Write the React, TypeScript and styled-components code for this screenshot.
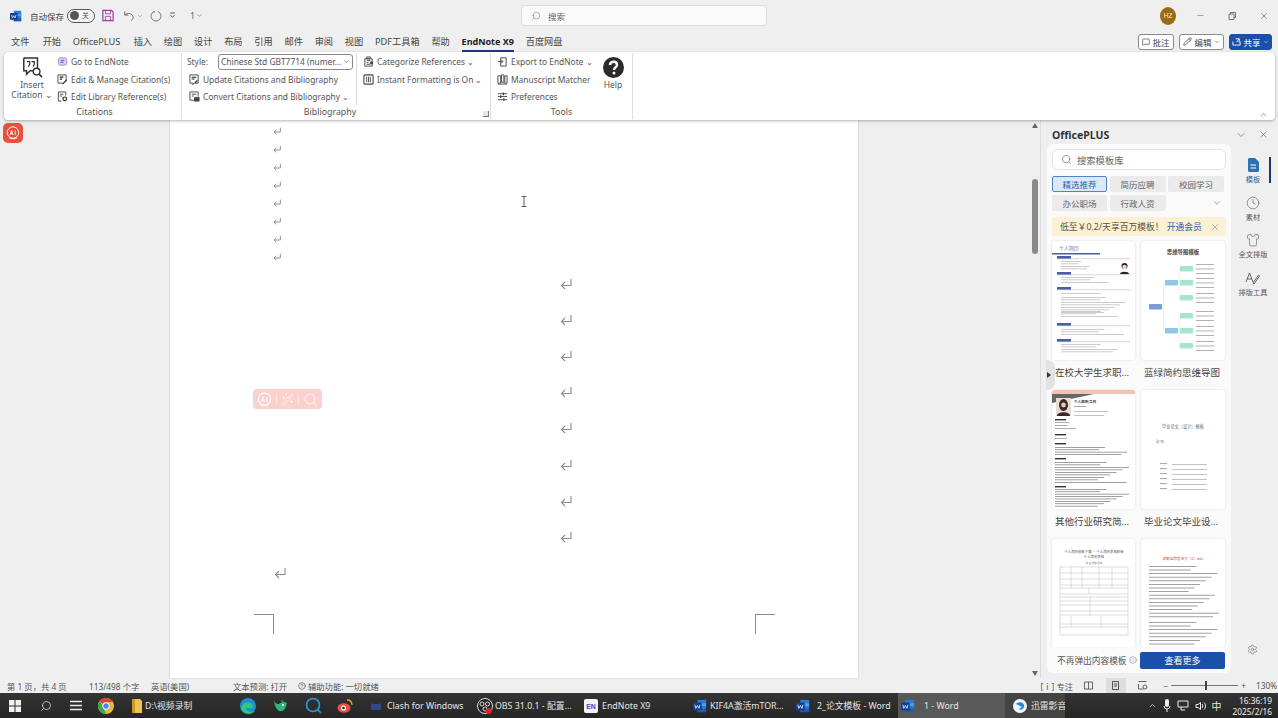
import React from "react";
import styled, { createGlobalStyle } from "styled-components";
import { Search, X, Minus, ChevronDown, ChevronUp, Settings, Pencil, MessageSquare, Clock, Shirt, CircleHelp, Wand2, Info } from "lucide-react";

const Global = createGlobalStyle`
  html, body { margin: 0; padding: 0; background: #efefef; }
  body { font-family: "Noto Sans", "Noto Sans CJK SC", sans-serif; color: #3a3a3a; }
  svg { flex: none; display: block; }
`;
const Root = styled.div`
  width: 1278px; height: 718px; overflow: hidden; position: relative;
  display: flex; flex-direction: column; background: #efefef;
`;

/* Title bar */
const TitleBar = styled.div`height: 31px; flex: none; display: flex; align-items: center; padding-left: 10px; position: relative;`;
const AutoSave = styled.span`font-size: 8.5px; margin-left: 8px; width: 37px; color: #444;`;
const Toggle = styled.div`
  width: 28px; height: 14px; border: 1px solid #555; border-radius: 8px; box-sizing: border-box;
  display: flex; align-items: center; padding-left: 2px; gap: 3px; background: #f6f6f6;
`;
const ToggleDot = styled.div`width: 9px; height: 9px; border-radius: 50%; background: #555;`;
const ToggleX = styled.span`font-size: 7px; color: #555; line-height: 1;`;
const QuickTools = styled.div`display: flex; align-items: center; margin-left: 7px; color: #666;`;
const Quick = styled.span<{ $ml: number }>`display: inline-flex; margin-left: ${p => p.$ml}px;`;
const TinyNum = styled.span`font-size: 9px; margin-left: 14px; display: flex; align-items: center; gap: 1px;`;
const SearchBar = styled.div`
  position: absolute; left: 521px; top: 5px; width: 246px; height: 21px; box-sizing: border-box;
  background: #fafafa; border: 1px solid #dcdcdc; border-radius: 4px; display: flex; align-items: center;
  padding-left: 9px; gap: 7px; font-size: 8.5px; color: #666;
`;
const Flip = styled.span`display: inline-flex; transform: scaleX(-1);`;
const WinControls = styled.div`margin-left: auto; display: flex; align-items: center; color: #444;`;
const Avatar = styled.div`
  width: 16px; height: 18px; border-radius: 50%; background: #9a6a14; color: #f6e9c8; font-size: 7px;
  display: flex; align-items: center; justify-content: center; margin-right: 12px;
`;
const WinBtn = styled.div<{ $w: number }>`width: ${p => p.$w}px; display: flex; justify-content: center;`;

/* Tabs */
const TabRow = styled.div`height: 21px; flex: none; display: flex; align-items: center; padding-left: 11px; gap: 11.8px; font-size: 9.2px; color: #444;`;
const Tab = styled.span<{ $active?: boolean; $ml?: number }>`
  position: relative; white-space: nowrap; line-height: 21px; margin-left: ${p => p.$ml ?? 0}px;
  font-weight: ${p => (p.$active ? 700 : 400)}; color: ${p => (p.$active ? "#222" : "#444")};
  ${p => p.$active && `font-size: 9px; &::after{content:"";position:absolute;left:0;right:0;bottom:0;height:2px;background:#1c3a7a;}`}
`;
const TabActions = styled.div`margin-left: auto; margin-right: 6px; display: flex; gap: 5px; align-items: center;`;
const ActionBtn = styled.div<{ $w: number; $blue?: boolean }>`
  width: ${p => p.$w}px; height: 16px; box-sizing: border-box; border-radius: 3px; display: flex; align-items: center; justify-content: center; gap: 2px;
  font-size: 8.5px; border: 1px solid ${p => (p.$blue ? "#1a50a8" : "#8a8a8a")};
  background: ${p => (p.$blue ? "#1a50a8" : "#fff")}; color: ${p => (p.$blue ? "#fff" : "#444")};
`;

/* Ribbon */
const Ribbon = styled.div`
  height: 68px; flex: none; margin: 0 3px 0 4px; background: #fff; border-radius: 5px 5px 4px 4px;
  box-shadow: 0 1px 3px rgba(0,0,0,.3); display: flex; position: relative; z-index: 3; padding-left: 6px; box-sizing: border-box;
`;
const Group = styled.div<{ $w: number }>`
  width: ${p => p.$w}px; flex: none; display: flex; flex-direction: column; border-right: 1px solid #dedede; box-sizing: border-box; position: relative; margin: 1px 0;
`;
const GroupBody = styled.div`height: 52px; flex: none; display: flex;`;
const GroupLabel = styled.div<{ $pr?: number }>`height: 14px; text-align: center; font-size: 8.8px; color: #555; line-height: 14px; padding-right: ${p => p.$pr ?? 0}px;`;
const BigBtn = styled.div<{ $w: number }>`
  width: ${p => p.$w}px; flex: none; display: flex; flex-direction: column; align-items: center; font-size: 8.5px; line-height: 10px; color: #555; padding-top: 4px; text-align: center;
`;
const BigIcon = styled.div`height: 21px; margin-bottom: 2px;`;
const SmallCol = styled.div<{ $pl?: number; $w?: number; $line?: boolean }>`
  display: flex; flex-direction: column; padding-left: ${p => p.$pl ?? 0}px; ${p => p.$w && `width:${p.$w}px;box-sizing:border-box;`}
  ${p => p.$line && "border-right:1px solid #dedede;"}
`;
const SmallBtn = styled.div<{ $indent?: number; $gap?: number }>`
  height: 17.5px; flex: none; display: flex; align-items: center; gap: ${p => p.$gap ?? 3}px; font-size: 8.4px; color: #555; white-space: nowrap; padding-left: ${p => p.$indent ?? 0}px;
`;
const StyleRow = styled.div`height: 17.5px; flex: none; display: flex; align-items: center; font-size: 8.4px; color: #555;`;
const StyleLabel = styled.span`width: 31px;`;
const StyleSelect = styled.div`
  width: 135px; height: 16px; border: 1px solid #8a8a8a; border-radius: 3px; box-sizing: border-box; display: flex; align-items: center;
  justify-content: space-between; padding: 0 2px 0 2px; font-size: 8.4px; white-space: nowrap; color: #555;
`;
const DialogMark = styled.div`position: absolute; right: 1px; bottom: 2px; width: 5px; height: 5px; border-right: 1px solid #777; border-bottom: 1px solid #777; background: #e4e4e4;`;
const Collapse = styled.div`position: absolute; right: 7px; bottom: 1px; color: #777;`;

/* Main */
const Main = styled.div`flex: 1; display: flex; min-height: 0; position: relative;`;
const LeftGutter = styled.div`width: 170px; flex: none; position: relative;`;
const RedBtn = styled.div`
  position: absolute; left: 3px; top: 3px; width: 20px; height: 20px; border-radius: 5px; background: #e8503f;
  display: flex; align-items: center; justify-content: center;
`;
const Page = styled.div`
  width: 688px; flex: none; background: #fff; box-shadow: 0 0 2px rgba(0,0,0,.2); box-sizing: border-box; padding: 2px 83px 0 84px; color: #8b8b8b;
`;
const Para = styled.div<{ $h: number; $ml: number }>`height: ${p => p.$h}px; display: flex; align-items: center; padding-left: ${p => p.$ml}px;`;
const CropRow = styled.div`display: flex; justify-content: space-between; margin-top: 23px;`;
const Crop = styled.div<{ $right?: boolean }>`
  width: 20px; height: 20px; border-top: 1px solid #888; box-sizing: border-box;
  ${p => (p.$right ? "border-left:1px solid #888;" : "border-right:1px solid #888;")}
`;
const RightGutter = styled.div`width: 172px; flex: none;`;
const IBeam = styled.div`position: absolute; left: 521px; top: 76px; width: 6px; height: 11px; color: #333;`;
const FloatBar = styled.div`
  position: absolute; left: 253px; top: 269px; width: 69px; height: 20px; border-radius: 4px; background: #fbd0ce;
  display: flex; align-items: center; justify-content: space-around; padding: 0 2px; box-sizing: border-box;
`;
const FloatSep = styled.div`width: 1px; height: 10px; background: #fde4e3;`;

/* Scrollbar */
const Scrollbar = styled.div`width: 11px; flex: none; position: relative; display: flex; flex-direction: column; align-items: center; justify-content: space-between; padding: 3px 0 2px; box-sizing: border-box; border-right: 1px solid #dcdcdc;`;
const Arrow = styled.div<{ $down?: boolean }>`
  width: 0; height: 0; border-left: 3.5px solid transparent; border-right: 3.5px solid transparent;
  ${p => (p.$down ? "border-top: 5px solid #666;" : "border-bottom: 5px solid #666;")}
`;
const Thumb = styled.div`position: absolute; left: 2px; top: 59px; width: 6px; height: 75px; border-radius: 3px; background: #8a8a8a;`;

/* Panel */
const Panel = styled.div`flex: 1; display: flex; flex-direction: column; position: relative; min-width: 0;`;
const PanelHead = styled.div`height: 24px; flex: none; box-sizing: border-box; padding: 6px 9px 0 11px; display: flex; align-items: center; font-size: 10.5px; font-weight: 700; color: #333;`;
const PanelHeadIcons = styled.div`margin-left: auto; display: flex; gap: 11px; color: #555;`;
const PanelRow = styled.div`flex: 1; display: flex; min-height: 0;`;
const PanelMain = styled.div`width: 190px; flex: none; display: flex; flex-direction: column; position: relative;`;
const PanelBody = styled.div`
  margin-left: 6px; width: 184px; height: 529px; background: #fafafa; border-radius: 6px; box-sizing: border-box; padding: 5px 5px 0 5px; display: flex; flex-direction: column; overflow: hidden;
`;
const PanelSearch = styled.div`
  height: 21px; flex: none; border: 1px solid #e4e4e4; border-radius: 6px; background: #fff; box-sizing: border-box; display: flex; align-items: center; padding-left: 8px; gap: 5px; font-size: 9.3px; color: #666;
`;
const Chips = styled.div`display: grid; grid-template-columns: 55px 56px 56px; gap: 3px 2.5px; margin-top: 6px; position: relative; flex: none;`;
const Chip = styled.div<{ $on?: boolean }>`
  height: 16px; border-radius: 2px; font-size: 8.5px; display: flex; align-items: center; justify-content: center; box-sizing: border-box;
  background: ${p => (p.$on ? "#dbe8f7" : "#ebebeb")}; color: ${p => (p.$on ? "#2b5ea8" : "#666")}; ${p => p.$on && "border:1px solid #4d85c5;"}
`;
const ChipMore = styled.div`display: flex; align-items: center; justify-content: flex-end; padding-right: 2px; color: #555;`;
const Banner = styled.div`
  height: 19px; flex: none; margin-top: 6px; background: #fdf1d3; border-radius: 2px; display: flex; align-items: center; padding: 0 6px 0 8px; font-size: 8.8px; color: #5a5040; gap: 3px;
`;
const BannerLink = styled.span`color: #2b5ea8;`;
const BannerClose = styled.div`margin-left: auto; display: flex; color: #777;`;
const Cards = styled.div`display: grid; grid-template-columns: 83px 84px; column-gap: 6px; margin-top: 5px; flex: none;`;
const CardWrap = styled.div`display: flex; flex-direction: column;`;
const Card = styled.div<{ $h?: number }>`
  height: ${p => p.$h ?? 119}px; background: #fff; border-radius: 3px; box-shadow: 0 0 2px rgba(0,0,0,.15); overflow: hidden;
`;
const CardTitle = styled.div`height: 30px; padding: 5.5px 0 0 3px; box-sizing: border-box; font-size: 9.5px; color: #444; white-space: nowrap; line-height: 13px;`;
const PanelFoot = styled.div`
  position: absolute; left: 6px; top: 503px; width: 184px; height: 26px; background: #fafafa; border-radius: 0 0 6px 6px; display: flex; align-items: center; box-sizing: border-box; padding: 0 6px 0 10px; font-size: 8.7px; color: #555; gap: 2px;
`;
const MoreBtn = styled.div`margin-left: auto; width: 85px; height: 17px; border-radius: 2px; background: #1a50a8; color: #fff; font-size: 9px; display: flex; align-items: center; justify-content: center;`;
const Rail = styled.div`flex: 1; display: flex; flex-direction: column; align-items: center; position: relative; padding: 13px 3px 0 0; box-sizing: border-box;`;
const RailItem = styled.div<{ $on?: boolean }>`height: 37.5px; flex: none; display: flex; flex-direction: column; align-items: center; font-size: 7.2px; line-height: 10px; color: ${p => (p.$on ? "#2e5f9e" : "#555")}; white-space: nowrap; gap: 1px;`;
const RailItemIcon = styled.div`height: 16px; display: flex; align-items: center;`;
const RailMark = styled.div`position: absolute; right: 7px; top: 13px; width: 2px; height: 26px; background: #1c3a6e;`;
const RailGear = styled.div`position: absolute; right: 20px; top: 500px; color: #555; display: flex;`;
const Handle = styled.div`
  position: absolute; left: 5px; top: 240px; width: 9px; height: 30px; background: #e2e2e2; border-radius: 0 8px 8px 0; display: flex; align-items: center; padding-left: 1px; box-sizing: border-box;
`;
const HandleArrow = styled.div`width: 0; height: 0; border-top: 3.5px solid transparent; border-bottom: 3.5px solid transparent; border-left: 4px solid #333;`;

/* Status */
const StatusBar = styled.div`height: 15px; flex: none; display: flex; align-items: center; font-size: 8.3px; color: #555; position: relative;`;
const StatusText = styled.span<{ $w: number; $pl?: number }>`width: ${p => p.$w}px; flex: none; white-space: nowrap; display: flex; align-items: center; gap: 2px; box-sizing: border-box; padding-left: ${p => p.$pl ?? 0}px;`;
const StatusRight = styled.div`margin-left: auto; display: flex; align-items: center; height: 15px;`;
const ViewBtn = styled.div<{ $on?: boolean; $mr?: number }>`width: 20px; height: 15px; margin-right: ${p => p.$mr ?? 7}px; display: flex; align-items: center; justify-content: center; background: ${p => (p.$on ? "#dddddd" : "transparent")};`;
const Slider = styled.div`width: 67px; height: 1px; background: #777; position: relative; margin: 0 3px;`;
const SliderKnob = styled.div`position: absolute; left: 34px; top: -4px; width: 2px; height: 9px; background: #444;`;

/* Taskbar */
const Taskbar = styled.div`height: 25px; flex: none; background: linear-gradient(#343434, #262626); display: flex; align-items: stretch; color: #e6e6e6; font-size: 8.8px; position: relative;`;
const TaskSlot = styled.div<{ $w: number; $active?: boolean; $soft?: boolean; $pl?: number; $gap?: number; $left?: boolean }>`
  width: ${p => p.$w}px; flex: none; display: flex; align-items: center; justify-content: ${p => (p.$left ? "flex-start" : "center")};
  gap: ${p => p.$gap ?? 5}px; white-space: nowrap; overflow: hidden; box-sizing: border-box; padding-left: ${p => p.$pl ?? 0}px;
  background: ${p => (p.$active ? "#595959" : p.$soft ? "#444" : "transparent")};
`;
const Tray = styled.div`margin-left: auto; display: flex; align-items: center; gap: 6px; padding-right: 6px;`;
const Clock2 = styled.div`font-size: 8.3px; line-height: 11px; text-align: right; margin-left: 5px; color: #eee;`;
const TrayZh = styled.span`font-size: 10px;`;

/* ----- drawings ----- */
const ReturnMark = ({ big }: { big?: boolean }) => (
  <svg width={big ? 12 : 8} height={big ? 12 : 8} viewBox="0 0 12 12" fill="none" stroke="#8b8b8b" strokeWidth={big ? 1.1 : 1.4}>
    <path d="M11 1v6.5H1.5M5 4 1.5 7.5 5 11" />
  </svg>
);
const WordIcon = ({ s = 12 }: { s?: number }) => (
  <svg width={s} height={s} viewBox="0 0 16 16"><path d="M5 1h10v14H5z" fill="#2b7cd3" /><path d="M5 5h10v3H5z" fill="#41a5ee" /><path d="M5 11h10v4H5z" fill="#185abd" /><rect x="0" y="4" width="10" height="9" rx="1" fill="#103f91" /><path d="M2 6.5l1.2 4.2L5 7.5l1.8 3.2L8 6.5" fill="none" stroke="#fff" strokeWidth=".9" /></svg>
);
const AiGlyph = ({ c = "#fff", s = 14 }: { c?: string; s?: number }) => (
  <svg width={s} height={s} viewBox="0 0 16 16" fill="none" stroke={c}>
    <circle cx="8" cy="7.5" r="6.5" strokeWidth="1.1" />
    <path d="M4.6 10.3 6.3 5l1.7 5.3M5.2 8.7h2.2M10.6 5v5.3" strokeWidth="1" />
    <path d="M3.5 13.5c3 1.4 6 1.4 9 0" strokeWidth="1" />
  </svg>
);
const InsertIcon = () => (
  <svg width="24" height="21" viewBox="0 0 24 23" fill="none" stroke="#333"><path d="M3 1h15v11M3 1v14h3v4l4-4h4" strokeWidth="1.6" /><path d="M6.5 5h3v3l-1.5 2.5M11.5 5h3v3L13 10.5" strokeWidth="1.3" /><circle cx="17" cy="16" r="3.7" strokeWidth="1.5" /><path d="M19.7 18.7 23 22" strokeWidth="1.8" /></svg>
);
const NoteIcon = ({ kind }: { kind: string }) => {
  const common = { width: 11, height: 11, viewBox: "0 0 12 12", fill: "none", stroke: "#444", strokeWidth: 1 } as const;
  if (kind === "en") return <svg {...common}><rect x="1.5" y="2" width="9" height="8" rx="2" fill="#d8d0f0" stroke="#9a8fd0" /><path d="M4 5h4M4 7h3" stroke="#5f4fb0" /></svg>;
  if (kind === "edit") return <svg {...common}><path d="M1 1h9v6M1 1v9h5" /><path d="M3 3.5h4M3 5.5h2.5M6 11l4.5-4.5" stroke="#222" strokeWidth="1.3" /></svg>;
  if (kind === "lib") return <svg {...common}><path d="M1.5 1h8v4M1.5 1v10h3.5" /><path d="M3 3.5h4M3 5.5h2.5" /><circle cx="8.5" cy="8.5" r="2" stroke="#222" strokeWidth="1.2" /></svg>;
  if (kind === "update") return <svg {...common}><path d="M1 1h9v9H6l-2 1.5V10H1z" /><path d="M3 3.5h5M3 5.5h3M9 7l-2.5 3" stroke="#222" strokeWidth="1.2" /></svg>;
  if (kind === "convert") return <svg {...common}><path d="M1 1h9v5M1 1v9h5" /><path d="M3 3.5h5M3 5.5h2" /><path d="M6 7h5v4H6z" fill="#444" /></svg>;
  if (kind === "cat") return <svg {...common}><path d="M2 3h8v8H2z" /><path d="M4 1h4v2H4zM4 5h4M4 7h2M4 9h4" /><path d="M8 6.5h2.5v2H8z" fill="#444" /></svg>;
  if (kind === "fmt") return <svg {...common}><rect x="1" y="1" width="10" height="10" rx="1" strokeWidth="1.2" /><path d="M4 3v6M6 3v6M8 3v6" /></svg>;
  if (kind === "export") return <svg {...common}><path d="M4 2h6v9H4zM1 6h5M4.5 4 6.5 6 4.5 8" /></svg>;
  if (kind === "match") return <svg {...common}><path d="M1 2h3v8H1zM5 1h2.5v8H5zM8.5 2H11v8H8.5zM1 11h10" /></svg>;
  return <svg {...common}><path d="M1 3h10M1 6h10M1 9.5h10" /><path d="M7 1.5v3M4 4.5v3M7.5 8v3" strokeWidth="1.3" /></svg>;
};
const HelpIcon = () => (
  <svg width="21" height="21" viewBox="0 0 21 21"><circle cx="10.5" cy="10.5" r="10.5" fill="#2b2b2b" /><path d="M7 8c0-2 1.6-3.3 3.6-3.3S14 6 14 7.9c0 2.4-3 2.6-3 5" fill="none" stroke="#fff" strokeWidth="2.4" /><circle cx="11" cy="16" r="1.5" fill="#fff" /></svg>
);
const lines = (ys: number[], x: number, w: number, c = "#b5b5b5", h = 0.7, seedW = true) =>
  ys.map((y, i) => <rect key={`${x}-${y}`} x={x} y={y} width={seedW ? w * (0.55 + ((i * 37 + 11) % 45) / 100) : w} height={h} fill={c} />);
const range = (from: number, n: number, step: number) => Array.from({ length: n }, (_, i) => from + i * step);

const Tag = ({ y, w = 14, c = "#4a5fa0" }: { y: number; w?: number; c?: string }) => (
  <g><rect x="5" y={y} width={w} height="2.6" fill={c} /><rect x="5" y={y + 2.6} width="74" height=".5" fill={c} opacity=".5" /></g>
);
const ThumbResume = () => (
  <svg width="84" height="119" viewBox="0 0 84 119">
    <text x="7" y="9" fontSize="5" fill="#5b6fb0" fontFamily="Noto Sans CJK SC">个人简历</text>
    <rect x="0" y="12" width="48" height="1.5" fill="#4a5fa0" />
    <Tag y={15} />{lines(range(20, 4, 2.5), 9, 30)}
    <circle cx="72.5" cy="25" r="3" fill="#222" /><circle cx="72.5" cy="26" r="2.2" fill="#f3d6c4" /><path d="M68 33c0-3 9-3 9 0z" fill="#222" />
    <Tag y={31} />{lines(range(36, 3, 2.5), 9, 50)}
    <Tag y={46} />{lines([52], 9, 60)}{lines(range(56, 7, 2.5), 9, 68)}{lines(range(70, 3, 2.5), 9, 60)}
    <Tag y={82} />{lines(range(88, 3, 2.5), 9, 66)}
    <Tag y={98} />{lines(range(103, 4, 2.5), 9, 60)}
  </svg>
);
const Node = ({ x, y, w, c }: { x: number; y: number; w: number; c: string }) => <rect x={x} y={y} width={w} height="5.5" rx=".8" fill={c} />;
const ThumbMind = () => {
  const greens = [25, 39, 54, 72, 87, 102];
  return (
    <svg width="84" height="119" viewBox="0 0 84 119">
      <text x="42" y="13" fontSize="5.4" fontWeight="700" textAnchor="middle" fill="#444" fontFamily="Noto Sans CJK SC">思维导图模板</text>
      <path d="M21 66h1.5V42H24M21 66h1.5V90H24M37 42h1V28h1M37 42h2M37 42h1V57h1M37 90h1V75h1M37 90h2M37 90h1V105h1" fill="none" stroke="#cde" strokeWidth=".4" />
      <Node x={8} y={63} w={13} c="#7a9bd8" /><Node x={24} y={39} w={13} c="#90c5e8" /><Node x={24} y={87} w={13} c="#90c5e8" />
      {greens.map(y => <g key={y}><Node x={39} y={y} w={13} c="#a5e5d0" />{[-2, 2.5, 7].map(d => <rect key={d} x="55" y={y + d} width="18" height=".9" fill="#aaa" />)}</g>)}
    </svg>
  );
};
const ThumbResume2 = () => (
  <svg width="84" height="119" viewBox="0 0 84 119">
    <rect width="84" height="4" fill="#f2c3ae" /><path d="M0 4h42L0 13z" fill="#666" />
    <rect x="4" y="8" width="15" height="18" fill="#e8dcd6" /><ellipse cx="11.5" cy="15" rx="4.5" ry="6" fill="#3a2a25" /><circle cx="11.5" cy="15" r="2.4" fill="#eac6b4" /><path d="M5 26c0-5 13-5 13 0z" fill="#3a2a25" />
    <text x="22" y="13" fontSize="3.5" fontWeight="700" fill="#333" fontFamily="Noto Sans CJK SC">个人简历/工作</text>
    {lines([16], 22, 18, "#888")}{lines([21, 25], 22, 52, "#aaa")}
    {[29, 44, 53, 68, 96].map(y => <g key={y}><rect x="3" y={y} width="11" height="1.4" fill="#333" /></g>)}
    {lines(range(32, 3, 3), 3, 22, "#888")}{lines([48], 3, 18, "#888")}
    {lines(range(57, 4, 2.4), 3, 76, "#777")}{lines(range(72, 9, 2.5), 3, 78, "#777")}{lines(range(99, 8, 2.4), 3, 78, "#777")}
  </svg>
);
const ThumbThesis = () => (
  <svg width="84" height="119" viewBox="0 0 84 119">
    <text x="42" y="38" fontSize="4.2" textAnchor="middle" fill="#666" fontFamily="Noto Sans CJK SC">毕业论文（设计）模板</text>
    <text x="15" y="53" fontSize="3.4" fill="#777" fontFamily="Noto Sans CJK SC">题 目:</text>
    {range(73, 6, 5).map(y => <g key={y}><rect x="19" y={y} width="7" height="1.1" fill="#aaa" /><rect x="31" y={y + 1} width="35" height=".6" fill="#999" /></g>)}
  </svg>
);
const ThumbForm = () => (
  <svg width="84" height="108" viewBox="0 0 84 108">
    <text x="42" y="14" fontSize="3.4" textAnchor="middle" fill="#555" fontFamily="Noto Sans CJK SC">个人简历模板下载 · 个人简历表格模板</text>
    <text x="42" y="19" fontSize="3.4" textAnchor="middle" fill="#555" fontFamily="Noto Sans CJK SC">个人简历表格</text>
    <text x="42" y="25" fontSize="2.5" textAnchor="middle" fill="#777" fontFamily="Noto Sans CJK SC">姓 名 求职 意向</text>
    <g fill="none" stroke="#bbb" strokeWidth=".5">
      <rect x="8" y="28" width="68" height="68" />
      {[34, 40, 46, 49, 55, 58, 62, 66, 72, 76, 85, 88].map(y => <path key={y} d={`M8 ${y}h68`} />)}
      <path d="M19 28v21M30 28v21M47 28v21M60 28v21M37 49v6M38 58v19M19 77v11M49 77v11" />
    </g>
  </svg>
);
const ThumbEssay = () => (
  <svg width="84" height="108" viewBox="0 0 84 108">
    <text x="42" y="21" fontSize="3.6" textAnchor="middle" fill="#c04a4a" fontFamily="Noto Sans CJK SC">求职自荐信范文（2）doc</text>
    {lines(range(27, 15, 3.6), 8, 72, "#8a8a8a", .8)}{lines(range(83, 7, 3.6), 8, 72, "#8a8a8a", .8)}
  </svg>
);

export default function App() {
  return (
    <Root>
      <Global />
      <TitleBar>
        <WordIcon />
        <AutoSave>自动保存</AutoSave>
        <Toggle><ToggleDot /><ToggleX>关</ToggleX></Toggle>
        <QuickTools>
          <svg width="12" height="13" viewBox="0 0 14 14"><path d="M1 1h10l2 2v10H1z" fill="none" stroke="#a03aa0" strokeWidth="1.4" /><path d="M4 1v4h6V1M4 13V8h6v5" fill="none" stroke="#a03aa0" /></svg>
          <Quick $ml={8}><svg width="13" height="12" viewBox="0 0 14 12" fill="none" stroke="#666"><path d="M3 1v4h4M3 5c3-3 8-2 9 2 0 2-1 3-2 4" /></svg></Quick>
          <Quick $ml={2}><ChevronDown size={6} /></Quick>
          <Quick $ml={7}><svg width="12" height="12" viewBox="0 0 12 12" fill="none" stroke="#777"><path d="M4 1.5a5 5 0 1 0 4 0M4 1v2" /></svg></Quick>
          <Quick $ml={7}><svg width="7" height="7" viewBox="0 0 7 7" fill="none" stroke="#666"><path d="M1 1h5M1.5 3 3.500 5.500 5.500 3" /></svg></Quick>
          <TinyNum>1<ChevronDown size={7} /></TinyNum>
        </QuickTools>
        <SearchBar><Flip><Search size={10} strokeWidth={1.2} /></Flip>搜索</SearchBar>
        <WinControls>
          <Avatar>HZ</Avatar>
          <WinBtn $w={25}><Minus size={9} strokeWidth={1.2} /></WinBtn>
          <WinBtn $w={37}>
            <svg width="8" height="8" viewBox="0 0 8 8" fill="none" stroke="#555" strokeWidth=".8"><path d="M1 2h5v5.500H1zM2.500 2V.5H7.500V5.500H6" /></svg>
          </WinBtn>
          <WinBtn $w={28}><X size={10} strokeWidth={1.2} /></WinBtn>
        </WinControls>
      </TitleBar>

      <TabRow>
        <Tab>文件</Tab><Tab $ml={1.5}>开始</Tab><Tab>OfficePLUS</Tab><Tab $ml={1.5}>插入</Tab><Tab>绘图</Tab><Tab>设计</Tab><Tab>布局</Tab><Tab>引用</Tab><Tab>邮件</Tab><Tab>审阅</Tab><Tab>视图</Tab><Tab>PDF工具箱</Tab><Tab>帮助</Tab><Tab $active>EndNote X9</Tab><Tab>百度网盘</Tab>
        <TabActions>
          <ActionBtn $w={36}><MessageSquare size={8} />批注</ActionBtn>
          <ActionBtn $w={45}><Pencil size={9} />编辑<ChevronDown size={6} /></ActionBtn>
          <ActionBtn $w={43} $blue>
            <svg width="9" height="9" viewBox="0 0 10 10" fill="none" stroke="#fff"><path d="M1 5v4h8V5M5 6l3-4M4 2h4v4" /></svg>
            共享<ChevronDown size={6} />
          </ActionBtn>
        </TabActions>
      </TabRow>

      <Ribbon>
        <Group $w={172}>
          <GroupBody>
            <BigBtn $w={44}><BigIcon><InsertIcon /></BigIcon><span>Insert</span><span>Citation ⌄</span></BigBtn>
            <SmallCol $pl={3}>
              <SmallBtn><NoteIcon kind="en" />Go to EndNote</SmallBtn>
              <SmallBtn><NoteIcon kind="edit" />Edit &amp; Manage Citation(s)</SmallBtn>
              <SmallBtn><NoteIcon kind="lib" />Edit Library Reference(s)</SmallBtn>
            </SmallCol>
          </GroupBody>
          <GroupLabel $pr={2}>Citations</GroupLabel>
        </Group>
        <Group $w={309}>
          <GroupBody>
            <SmallCol $pl={5} $w={175} $line>
              <StyleRow><StyleLabel>Style:</StyleLabel><StyleSelect>Chinese Std GBT7714 (numer...<ChevronDown size={7} /></StyleSelect></StyleRow>
              <SmallBtn $indent={2}><NoteIcon kind="update" />Update Citations and Bibliography</SmallBtn>
              <SmallBtn $indent={2}><NoteIcon kind="convert" />Convert Citations and Bibliography ⌄</SmallBtn>
            </SmallCol>
            <SmallCol $pl={6}>
              <SmallBtn><NoteIcon kind="cat" />Categorize References ⌄</SmallBtn>
              <SmallBtn><NoteIcon kind="fmt" />Instant Formatting is On ⌄</SmallBtn>
            </SmallCol>
          </GroupBody>
          <GroupLabel $pr={12}>Bibliography</GroupLabel>
          <DialogMark />
        </Group>
        <Group $w={142}>
          <GroupBody>
            <SmallCol $pl={6} $w={105}>
              <SmallBtn><NoteIcon kind="export" />Export to EndNote ⌄</SmallBtn>
              <SmallBtn><NoteIcon kind="match" />Manuscript Matcher</SmallBtn>
              <SmallBtn><NoteIcon kind="pref" />Preferences</SmallBtn>
            </SmallCol>
            <BigBtn $w={34}><BigIcon><HelpIcon /></BigIcon><span>Help</span></BigBtn>
          </GroupBody>
          <GroupLabel>Tools</GroupLabel>
        </Group>
        <Collapse><ChevronUp size={9} /></Collapse>
      </Ribbon>

      <Main>
        <LeftGutter><RedBtn><AiGlyph /></RedBtn></LeftGutter>
        <Page>
          {range(0, 8, 1).map(i => <Para key={i} $h={18} $ml={19}><ReturnMark /></Para>)}
          {range(0, 8, 1).map(i => <Para key={i} $h={36.1} $ml={306}><ReturnMark big /></Para>)}
          <Para $h={36.1} $ml={20}><ReturnMark big /></Para>
          <CropRow><Crop /><Crop $right /></CropRow>
        </Page>
        <RightGutter />
        <Scrollbar><Arrow /><Thumb /><Arrow $down /></Scrollbar>
        <Panel>
          <PanelHead>
            OfficePLUS
            <PanelHeadIcons><ChevronDown size={12} strokeWidth={1.2} /><X size={11} strokeWidth={1.2} /></PanelHeadIcons>
          </PanelHead>
          <PanelRow>
            <PanelMain>
              <PanelBody>
                <PanelSearch><Search size={11} strokeWidth={1.3} />搜索模板库</PanelSearch>
                <Chips>
                  <Chip $on>精选推荐</Chip><Chip>简历应聘</Chip><Chip>校园学习</Chip>
                  <Chip>办公职场</Chip><Chip>行政人资</Chip><ChipMore><ChevronDown size={10} strokeWidth={1.3} /></ChipMore>
                </Chips>
                <Banner>低至￥0.2/天享百万模板！<BannerLink>开通会员</BannerLink><BannerClose><X size={10} strokeWidth={1.2} /></BannerClose></Banner>
                <Cards>
                  <CardWrap><Card><ThumbResume /></Card><CardTitle>在校大学生求职...</CardTitle></CardWrap>
                  <CardWrap><Card><ThumbMind /></Card><CardTitle>蓝绿简约思维导图</CardTitle></CardWrap>
                  <CardWrap><Card><ThumbResume2 /></Card><CardTitle>其他行业研究简...</CardTitle></CardWrap>
                  <CardWrap><Card><ThumbThesis /></Card><CardTitle>毕业论文毕业设...</CardTitle></CardWrap>
                  <CardWrap><Card $h={108}><ThumbForm /></Card></CardWrap>
                  <CardWrap><Card $h={108}><ThumbEssay /></Card></CardWrap>
                </Cards>
              </PanelBody>
              <PanelFoot>不再弹出内容模板<Info size={8} strokeWidth={1.2} /><MoreBtn>查看更多</MoreBtn></PanelFoot>
            </PanelMain>
            <Rail>
              <RailMark />
              <RailItem $on>
                <RailItemIcon><svg width="12" height="14" viewBox="0 0 12 14"><path d="M1 1.500C1 .7 1.700 0 2.500 0H8l4 4v8.500c0 .8-.7 1.500-1.500 1.500h-8C1.700 14 1 13.300 1 12.500z" fill="#2e6fb5" /><path d="M3.500 7h5.500M3.500 10h5.500" stroke="#fff" /></svg></RailItemIcon>
                模板
              </RailItem>
              <RailItem><RailItemIcon><Clock size={14} strokeWidth={1} /></RailItemIcon>素材</RailItem>
              <RailItem><RailItemIcon><Shirt size={14} strokeWidth={1} /></RailItemIcon>全文排版</RailItem>
              <RailItem>
                <RailItemIcon><svg width="15" height="14" viewBox="0 0 15 14" fill="none" stroke="#555" strokeWidth=".9"><path d="M1 11 4.500 2 8 11M2.200 8h4.600M8 12 13.500 4l1 1L9 13z" /></svg></RailItemIcon>
                排版工具
              </RailItem>
              <RailGear><Settings size={11} strokeWidth={1.1} /></RailGear>
            </Rail>
          </PanelRow>
          <Handle><HandleArrow /></Handle>
        </Panel>
        <IBeam>
          <svg width="6" height="11" viewBox="0 0 6 11" fill="none" stroke="#333" strokeWidth=".8"><path d="M.5.500h5M3 .500v10M.5 10.500h5" /></svg>
        </IBeam>
        <FloatBar>
          <AiGlyph s={15} />
          <FloatSep />
          <Wand2 size={13} color="#fff" strokeWidth={1.2} />
          <FloatSep />
          <Search size={15} color="#fff" strokeWidth={1.2} />
        </FloatBar>
      </Main>

      <StatusBar>
        <StatusText $w={89} $pl={7}>第 1 页，共 4 页</StatusText>
        <StatusText $w={62}>113/498 个字</StatusText>
        <StatusText $w={82}>英语(美国)</StatusText>
        <StatusText $w={65}>文本预测: 打开</StatusText>
        <StatusText $w={90}><CircleHelp size={8} />辅助功能: 一切就绪</StatusText>
        <StatusRight>
          <StatusText $w={38}>[ⅰ] 专注</StatusText>
          <ViewBtn><svg width="9" height="9" viewBox="0 0 9 9" fill="none" stroke="#666"><path d="M.5 1h8v7h-8zM4.500 1v7" /></svg></ViewBtn>
          <ViewBtn $on><svg width="7" height="9" viewBox="0 0 7 9" fill="none" stroke="#555"><path d="M.5.500h6v8h-6zM2 3h3M2 5h3" /></svg></ViewBtn>
          <ViewBtn $mr={11}><svg width="10" height="9" viewBox="0 0 10 9" fill="none" stroke="#666"><path d="M.5.500h8M.5 3v5h5" /><circle cx="7" cy="6" r="2" /></svg></ViewBtn>
          <span>−</span><Slider><SliderKnob /></Slider><span>+</span>
          <StatusText $w={32} $pl={10}>130%</StatusText>
        </StatusRight>
      </StatusBar>

      <Taskbar>
        <TaskSlot $w={30}><svg width="12" height="12" viewBox="0 0 12 12" fill="#f2f2f2"><path d="M0 0h5.500v5.500H0zM6.500 0H12v5.500H6.500zM0 6.500h5.500V12H0zM6.500 6.500H12V12H6.500z" /></svg></TaskSlot>
        <TaskSlot $w={32}><Flip><Search size={12} strokeWidth={1.4} color="#eee" /></Flip></TaskSlot>
        <TaskSlot $w={28}><svg width="12" height="11" viewBox="0 0 12 11" stroke="#eee" strokeWidth="1.6"><path d="M0 1.500h12M0 5.500h12M0 9.500h12" /></svg></TaskSlot>
        <TaskSlot $w={32}><svg width="16" height="16" viewBox="0 0 16 16"><circle cx="8" cy="8" r="8" fill="#e8b93a" /><path d="M8 0a8 8 0 0 1 7 4H8a4 4 0 0 0-3.500 2L1.600 3A8 8 0 0 1 8 0z" fill="#d9443a" /><path d="M1.600 3 5 9l3 7a8 8 0 0 1-6.400-13z" fill="#3aa757" /><circle cx="8" cy="8" r="3.300" fill="#4a86e8" stroke="#fff" /></svg></TaskSlot>
        <TaskSlot $w={109} $left $pl={10} $gap={3}><svg width="10" height="14" viewBox="0 0 10 14"><path d="M0 0h8l2 2v12H0z" fill="#f0c34e" /><path d="M0 0h3v14H0z" fill="#c99a2e" /></svg>D:\视频录制</TaskSlot>
        <TaskSlot $w={33}><svg width="16" height="16" viewBox="0 0 16 16"><circle cx="8" cy="8" r="8" fill="#1a8fd8" /><path d="M1 10C2 5 8 3 12 6c2 2 1 4-1 4H6c0 3 4 5 9 3-2 3-11 5-14-3z" fill="#34c57a" /></svg></TaskSlot>
        <TaskSlot $w={33}><svg width="15" height="15" viewBox="0 0 15 15"><path d="M1 3c2 3 3 3 5 3 2-2 5-3 8-1-1 2-1 7-5 8-5 1-7-4-8-10z" fill="#2fb37c" /><circle cx="10" cy="7" r="1" fill="#fff" /><path d="M9 1l2 3-3 0z" fill="#1e8b5e" /></svg></TaskSlot>
        <TaskSlot $w={32}><svg width="17" height="17" viewBox="0 0 17 17" fill="none" stroke="#2a9bd8" strokeWidth="1.6"><circle cx="8" cy="8" r="6.500" /><path d="M12.500 12.500 16 16" /></svg></TaskSlot>
        <TaskSlot $w={31}><svg width="16" height="14" viewBox="0 0 16 14"><ellipse cx="7" cy="9" rx="6.500" ry="4.800" fill="#e8503f" /><circle cx="6.500" cy="9" r="2.600" fill="#fff" /><circle cx="6.500" cy="9" r="1.300" fill="#222" /><path d="M10 1c3 0 5 2 5 5" fill="none" stroke="#f0a030" strokeWidth="1.300" /></svg></TaskSlot>
        <TaskSlot $w={113} $left $pl={11} $gap={6}><svg width="10" height="10" viewBox="0 0 10 10"><path d="M0 2l2 1h6l2-1v7H0z" fill="#2b4a86" /></svg>Clash for Windows</TaskSlot>
        <TaskSlot $w={106} $left $pl={4} $gap={2}><svg width="16" height="16" viewBox="0 0 16 16"><circle cx="8" cy="8" r="7.500" fill="#222" stroke="#ddd" /><circle cx="5" cy="6" r="2" fill="none" stroke="#ddd" /><circle cx="10.500" cy="6" r="2" fill="none" stroke="#ddd" /><circle cx="8" cy="11" r="2" fill="none" stroke="#ddd" /><circle cx="12" cy="13" r="3" fill="#e02020" /></svg>OBS 31.0.1 - 配置...</TaskSlot>
        <TaskSlot $w={109} $left $pl={5} $gap={4}><svg width="14" height="14" viewBox="0 0 14 14"><rect width="14" height="14" rx="2" fill="#f4f2fb" /><text x="7" y="10" textAnchor="middle" fontSize="7" fontWeight="700" fill="#5a3fb0" fontFamily="Liberation Sans">EN</text></svg>EndNote X9</TaskSlot>
        <TaskSlot $w={103} $left $pl={5} $gap={3}><WordIcon s={14} />KIF4A激活mTOR...</TaskSlot>
        <TaskSlot $w={107} $left $pl={5} $gap={7}><WordIcon s={14} />2_论文模板 - Word</TaskSlot>
        <TaskSlot $w={107} $left $active $pl={3} $gap={9}><WordIcon s={14} />1 - Word</TaskSlot>
        <TaskSlot $w={60} $left $soft $pl={8} $gap={4}><svg width="14" height="14" viewBox="0 0 14 14"><circle cx="7" cy="7" r="7" fill="#eef4fb" /><path d="M3 5c3-3 7-2 8 1s-3 6-5 4l3-2z" fill="#2a80d8" /></svg>迅雷影音</TaskSlot>
        <Tray>
          <ChevronUp size={9} />
          <svg width="8" height="13" viewBox="0 0 8 13" fill="#eee"><rect x="2" y="0" width="4" height="8" rx="2" /><path d="M1 7a3 3 0 0 0 6 0M4 10v3" fill="none" stroke="#eee" /></svg>
          <svg width="12" height="11" viewBox="0 0 12 11" fill="none" stroke="#eee"><path d="M1 1h10v6H1zM4 7v3h4" /></svg>
          <svg width="11" height="10" viewBox="0 0 11 10" fill="none" stroke="#eee"><path d="M1 3.500v3h2l2.500 2v-7L3 3.500zM7 3c1 1 1 3 0 4M9 1.500c2 2 2 5 0 7" /></svg>
          <TrayZh>中</TrayZh>
          <Clock2>16:36:19<br />2025/2/16</Clock2>
        </Tray>
      </Taskbar>
    </Root>
  );
}
